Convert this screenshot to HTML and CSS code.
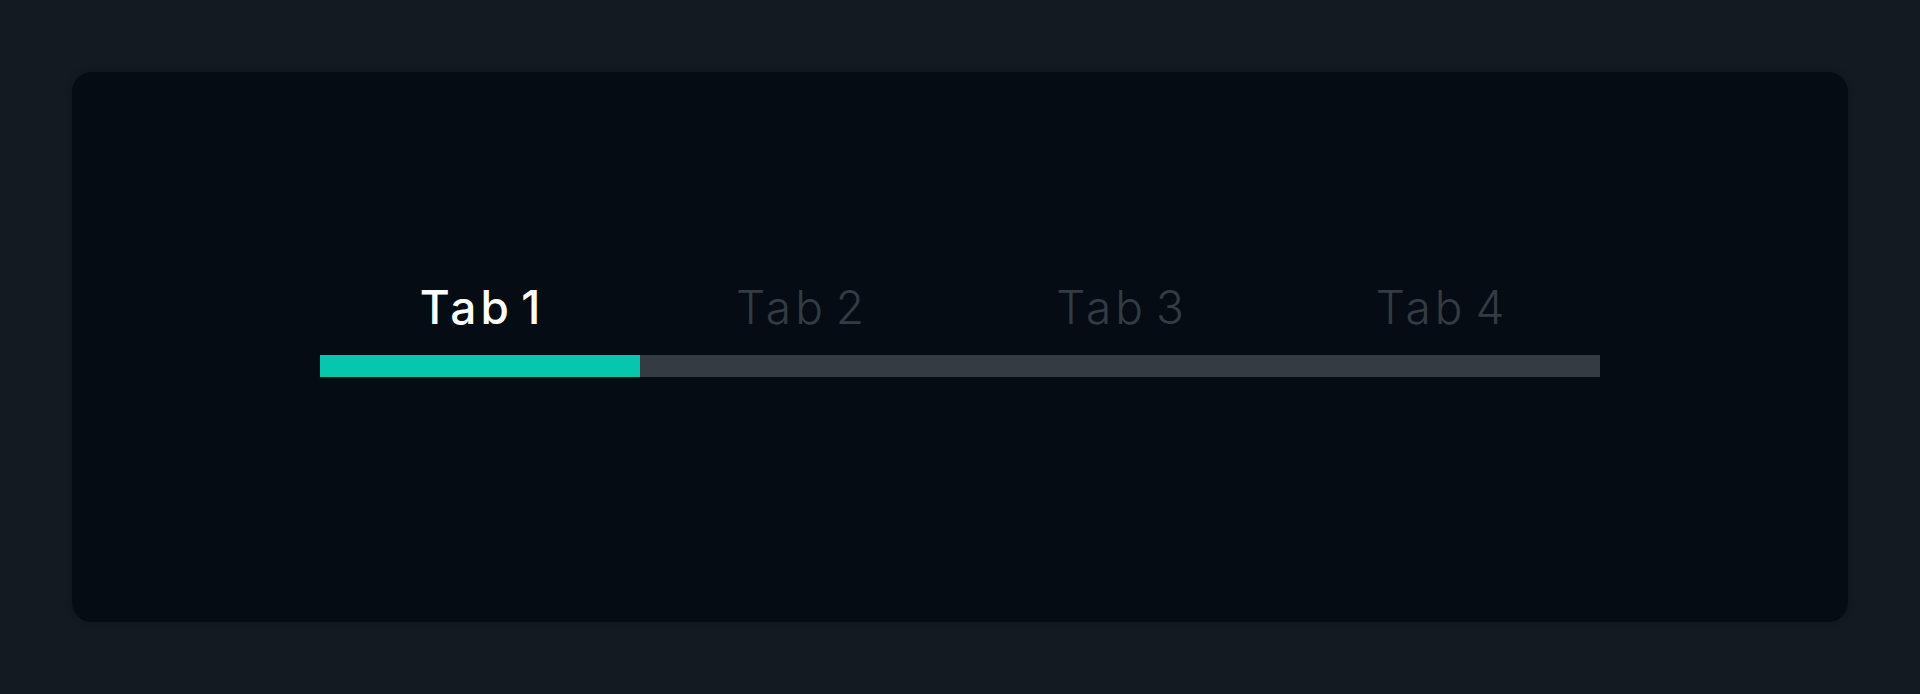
FILE: index.html
```html
<!DOCTYPE html>
<html lang="en">
<head>
<meta charset="utf-8">
<title>Tabs</title>
<link rel="stylesheet" href="styles.css">
</head>
<body>
  <main class="card">
    <div class="tabs">
      <div class="tab-labels">
        <button class="tab active">Tab 1</button>
        <button class="tab">Tab 2</button>
        <button class="tab">Tab 3</button>
        <button class="tab">Tab 4</button>
      </div>
      <div class="track">
        <div class="indicator"></div>
      </div>
    </div>
  </main>
</body>
</html>
```

FILE: styles.css
```css
html, body {
  margin: 0;
  height: 100%;
}
body {
  background: #141a21;
  padding: 72px;
  box-sizing: border-box;
  font-family: Inter, "Noto Sans", sans-serif;
}
.card {
  height: 100%;
  background: #060c13;
  border-radius: 20px;
  box-shadow: 0 0 6px rgba(0, 0, 0, 0.25);
  padding-top: 211px;
  box-sizing: border-box;
  display: flex;
  justify-content: center;
}
.tabs {
  width: 1280px;
}
.tab-labels {
  display: grid;
  grid-template-columns: repeat(4, 1fr);
}
.tab {
  background: none;
  border: 0;
  padding: 0 0 0 4px;
  font-family: inherit;
  font-size: 46px;
  line-height: 48px;
  letter-spacing: 4px;
  word-spacing: -8px;
  font-weight: 300;
  color: #323c42;
  text-align: center;
}
.tab.active {
  color: #ffffff;
  font-weight: 450;
}
.track {
  margin-top: 24px;
  height: 22px;
  background: #323c42;
}
.indicator {
  width: 25%;
  height: 100%;
  background: #06c6ae;
}
```
